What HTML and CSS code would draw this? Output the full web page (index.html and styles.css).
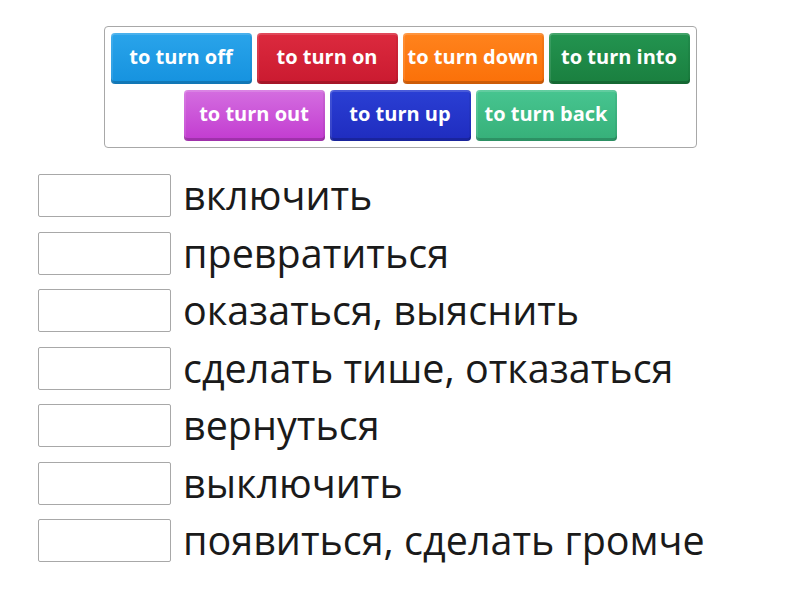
FILE: index.html
```html
<!DOCTYPE html>
<html lang="en">
<head>
    <meta charset="UTF-8">
    <meta name="viewport" content="width=device-width, initial-scale=1.0">
    <title>Match up</title>
    <link rel="stylesheet" href="styles.css">
</head>
<body>
    <div class="bank">
        <div class="tile blue">to turn off</div>
        <div class="tile red">to turn on</div>
        <div class="tile orange">to turn down</div>
        <div class="tile green">to turn into</div>
        <div class="tile purple">to turn out</div>
        <div class="tile navy">to turn up</div>
        <div class="tile teal">to turn back</div>
    </div>

    <ul class="answers">
        <li><span class="slot"></span><span class="word">включить</span></li>
        <li><span class="slot"></span><span class="word">превратиться</span></li>
        <li><span class="slot"></span><span class="word">оказаться, выяснить</span></li>
        <li><span class="slot"></span><span class="word">сделать тише, отказаться</span></li>
        <li><span class="slot"></span><span class="word">вернуться</span></li>
        <li><span class="slot"></span><span class="word">выключить</span></li>
        <li><span class="slot"></span><span class="word">появиться, сделать громче</span></li>
    </ul>
</body>
</html>
```

FILE: styles.css
```css
body {
    margin: 0;
    font-family: "Open Sans", "Noto Sans", sans-serif;
    background-color: #fff;
    color: #111;
}

.bank {
    width: 579px;
    margin: 26px auto 0;
    padding: 6px;
    border: 1px solid #a8a8a8;
    border-radius: 4px;
    display: flex;
    flex-wrap: wrap;
    justify-content: center;
    gap: 6px 5px;
}

.tile {
    width: 141px;
    height: 51px;
    box-sizing: border-box;
    border-radius: 4px;
    display: flex;
    align-items: center;
    justify-content: center;
    padding-bottom: 4px;
    color: #fff;
    font-size: 20px;
    font-weight: bold;
    white-space: nowrap;
    box-shadow: inset 0 -3px 0 rgba(0, 0, 0, 0.18), inset 0 2px 0 rgba(255, 255, 255, 0.15), inset 2px 0 0 rgba(255, 255, 255, 0.1), inset -2px 0 0 rgba(0, 0, 0, 0.05);
}

.blue { background: linear-gradient(#2aa4ea, #1592df); }
.red { background: linear-gradient(#dc2a3e, #ca1a30); }
.orange { background: linear-gradient(#ff831d, #fb7008); }
.green { background: linear-gradient(#239450, #1a7f3f); }
.purple { background: linear-gradient(#d46ee0, #c23bd0); }
.navy { background: linear-gradient(#2a3fd4, #1f2cbf); }
.teal { background: linear-gradient(#47c590, #36b079); }

.answers {
    list-style: none;
    margin: 26px 0 0 38px;
    padding: 0;
}

.answers li {
    display: flex;
    align-items: center;
    height: 43px;
    margin-bottom: 14.5px;
}

.slot {
    width: 133px;
    height: 43px;
    box-sizing: border-box;
    border: 1px solid #a8a8a8;
    border-radius: 2px;
    flex-shrink: 0;
}

.word {
    margin-left: 12px;
    font-size: 39.5px;
    line-height: 43px;
    color: #1a1a1a;
}
```
